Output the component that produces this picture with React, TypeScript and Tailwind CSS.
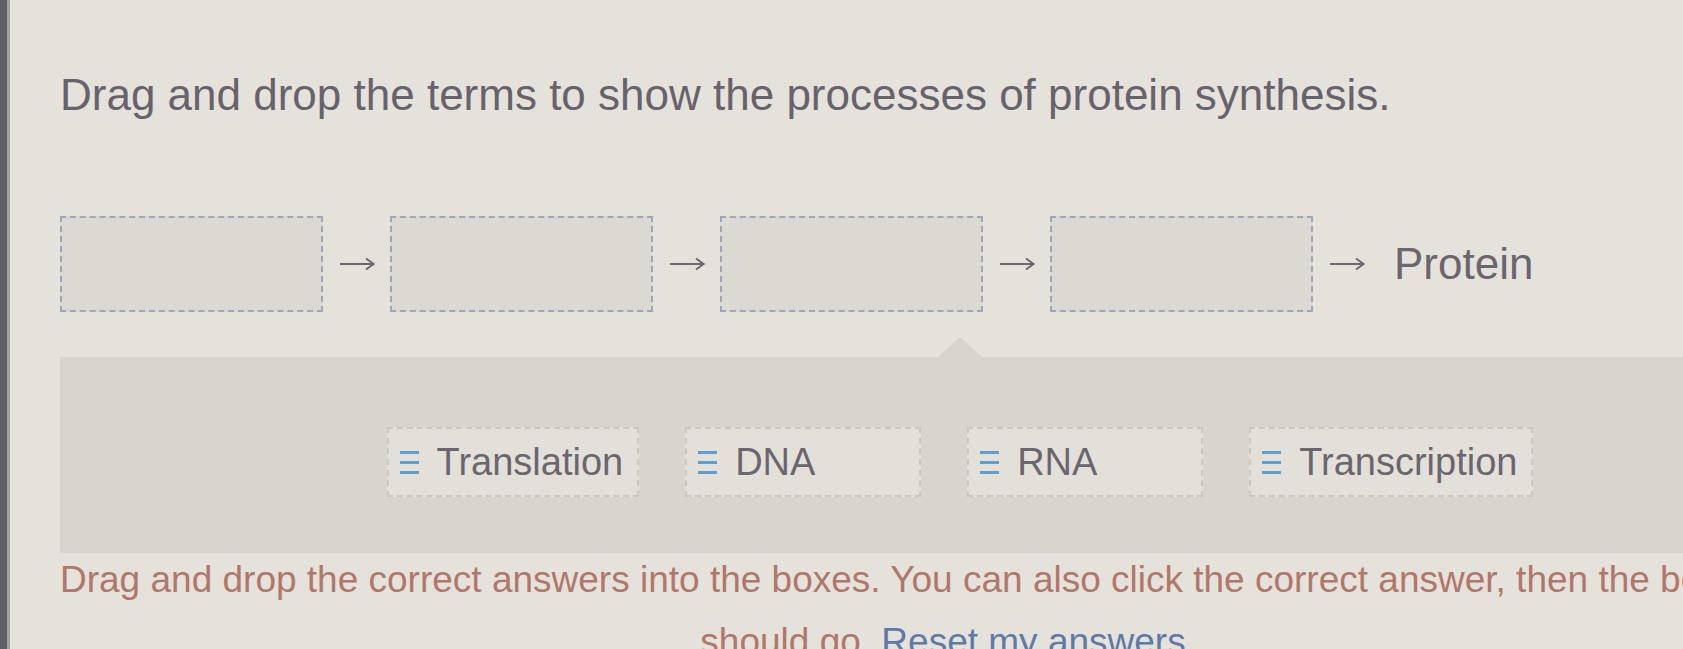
const boxes = [0, 1, 2, 3];
const terms = ["Translation", "DNA", "RNA", "Transcription"];

const Arrow = () => (
  <svg width="36" height="16" viewBox="0 0 36 16" fill="none">
    <path d="M1 8H34M27 2.5L34.5 8L27 13.5" stroke="#6e6970" strokeWidth="2" />
  </svg>
);

const GripIcon = () => (
  <div className="flex flex-col gap-[7px]">
    <span className="block w-[19px] h-[3px] bg-[#5c9fd1]" />
    <span className="block w-[19px] h-[3px] bg-[#5c9fd1]" />
    <span className="block w-[19px] h-[3px] bg-[#5c9fd1]" />
  </div>
);

export default function App() {
  return (
    <div className="w-screen h-[649px] overflow-hidden bg-[#e5e2db] flex font-['Liberation_Sans',Arial,sans-serif]">
      {/* dark bezel on the left */}
      <div className="w-[10px] shrink-0 bg-[#5e6063] border-r-[3px] border-[#a3a29e]" />

      <div className="ml-[50px] shrink-0 w-[1800px]">
        <h1 className="pt-[68px] text-[44px] leading-[53px] text-[#67626b] whitespace-nowrap">
          Drag and drop the terms to show the processes of protein synthesis.
        </h1>

        {/* drop targets */}
        <div className="mt-[95px] flex items-center">
          {boxes.map((b) => (
            <div key={b} className="flex items-center">
              <div className="w-[263px] h-[96px] bg-[#dcd9d3] border-2 border-dashed border-[#9ea6ba]" />
              <div className="w-[67px] flex justify-center">
                <Arrow />
              </div>
            </div>
          ))}
          <span className="ml-[14px] text-[44px] text-[#6b666e]">Protein</span>
        </div>

        {/* answer bank */}
        <div className="relative mt-[45px] h-[196px] w-[1800px] bg-[#d8d5cf] flex items-center justify-center gap-[46px] pt-[14px]">
          <div className="absolute top-[-20px] left-1/2 -translate-x-1/2 w-0 h-0 border-l-[22px] border-r-[22px] border-b-[20px] border-l-transparent border-r-transparent border-b-[#d8d5cf]" />
          {terms.map((t) => (
            <div
              key={t}
              className="min-w-[236px] h-[70px] pl-[11px] pr-[14px] flex items-center gap-[18px] bg-[#e3e0da] border-2 border-dashed border-[#cbc8c1]"
            >
              <GripIcon />
              <span className="text-[38px] text-[#6b666e]">{t}</span>
            </div>
          ))}
        </div>

        <p className="-mt-1 w-[1766px] text-center text-[37px] leading-[62px] text-[#b0776a] whitespace-nowrap">
          Drag and drop the correct answers into the boxes. You can also click the correct answer, then the box where it
          <br />
          should go. <a className="text-[#5f7aa6]">Reset my answers</a>
        </p>
      </div>
    </div>
  );
}
